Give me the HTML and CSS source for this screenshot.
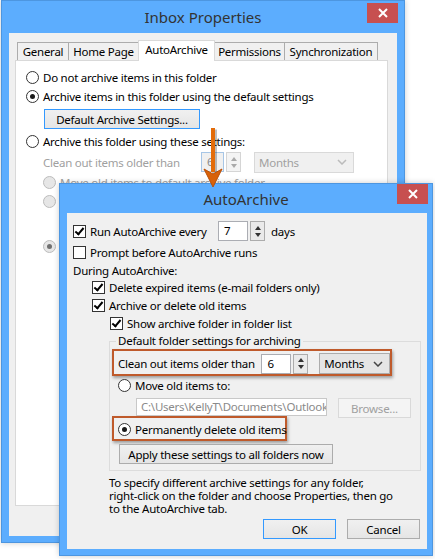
FILE: index.html
```html
<!DOCTYPE html>
<html lang="en">
  <head>
    <meta charset="UTF-8" />
    <title>AutoArchive</title>
    <link rel="stylesheet" href="styles.css">
  </head>
  <body>
    <div class="desk">
      <!-- folder properties dialog, behind -->
      <div class="window back">
        <div class="titlebar">
          <span class="title">Inbox Properties</span>
          <span class="close"><svg width="10" height="10" viewBox="0 0 10 10"><path d="M1 1L9 9M9 1L1 9" stroke="#fff" stroke-width="2"/></svg></span>
        </div>
        <div class="client">
          <div class="tabs">
            <span class="tab t51">General</span>
            <span class="tab t70">Home Page</span>
            <span class="tab t76 active">AutoArchive</span>
            <span class="tab t70">Permissions</span>
            <span class="tab t93">Synchronization</span>
          </div>
          <div class="panel">
            <div class="prow first"><span class="radio"></span>Do not archive items in this folder</div>
            <div class="prow"><span class="radio on"></span>Archive items in this folder using the default settings</div>
            <div class="btn focus wide">Default Archive Settings...</div>
            <div class="prow"><span class="radio"></span>Archive this folder using these settings:</div>
            <div class="prow ind dim tall">
              <span class="lbl">Clean out items older than</span>
              <span class="num dis">6</span>
              <span class="spin dis"><i class="up"></i><i class="down"></i></span>
              <span class="combo dis">Months<svg width="10" height="6" viewBox="0 0 10 6"><path d="M1 1L5 5L9 1" fill="none" stroke="#bbb" stroke-width="1.5"/></svg></span>
            </div>
            <div class="prow ind dim"><span class="radio dis"></span>Move old items to default archive folder</div>
            <div class="prow ind dim"><span class="radio dis"></span>Move old items to:</div>
            <div class="prow ind dim gap"><span class="radio dis on"></span>Permanently delete old items</div>
          </div>
        </div>
      </div>

      <!-- arrow pointing from the button to the opened dialog -->
      <svg class="arrow" width="30" height="70" viewBox="0 0 30 70">
        <path d="M15 0V44" stroke="rgba(0,0,0,.25)" stroke-width="5" transform="translate(1.5 1.5)"/>
        <path d="M15 0V44" stroke="#e36c0a" stroke-width="4"/>
        <path d="M6 41L15 59L24 41L15 46Z" fill="#d8620a" stroke="#b94f06" stroke-width="1"/>
      </svg>

      <!-- AutoArchive dialog, in front -->
      <div class="window front">
        <div class="titlebar small">
          <span class="title">AutoArchive</span>
          <span class="close"><svg width="10" height="10" viewBox="0 0 10 10"><path d="M1 1L9 9M9 1L1 9" stroke="#fff" stroke-width="2"/></svg></span>
        </div>
        <div class="client inner">
          <div class="row r20">
            <span class="check on"></span><span class="lbl w128">Run AutoArchive every</span>
            <span class="num">7</span>
            <span class="spin"><i class="up"></i><i class="down"></i></span>
            <span class="after">days</span>
          </div>
          <div class="row"><span class="check"></span>Prompt before AutoArchive runs</div>
          <div class="row">During AutoArchive:</div>
          <div class="row i1 short"><span class="check on"></span>Delete expired items (e-mail folders only)</div>
          <div class="row i1"><span class="check on"></span>Archive or delete old items</div>
          <div class="row i2"><span class="check on"></span>Show archive folder in folder list</div>

          <fieldset class="group">
            <legend>Default folder settings for archiving</legend>
            <div class="mark clean">
              <span class="lbl w144">Clean out items older than</span>
              <span class="num">6</span>
              <span class="spin"><i class="up"></i><i class="down"></i></span>
              <span class="combo">Months<svg width="10" height="6" viewBox="0 0 10 6"><path d="M1 1L5 5L9 1" fill="none" stroke="#444" stroke-width="1.5"/></svg></span>
            </div>
            <div class="row gi"><span class="radio"></span>Move old items to:</div>
            <div class="pathrow">
              <span class="path">C:\Users\KellyT\Documents\Outlook</span>
              <span class="btn dis browse">Browse...</span>
            </div>
            <div class="mark perm"><span class="radio on"></span>Permanently delete old items</div>
            <div class="btn apply">Apply these settings to all folders now</div>
          </fieldset>

          <p class="note">To specify different archive settings for any folder,<br>right-click on the folder and choose Properties, then go<br>to the AutoArchive tab.</p>

          <div class="actions">
            <span class="btn focus ok">OK</span>
            <span class="btn ok">Cancel</span>
          </div>
        </div>
      </div>
    </div>
  </body>
</html>
```

FILE: styles.css
```css
body {
  margin: 0;
  background: #fff;
  font-family: "Noto Sans", "Open Sans", sans-serif;
  font-size: 11.5px;
  letter-spacing: -0.25px;
  color: #000;
  white-space: nowrap;
}
.desk {
  position: relative;
  width: 435px;
  height: 559px;
  overflow: hidden;
}

/* window chrome */
.window {
  position: absolute;
  box-sizing: border-box;
  display: flex;
  flex-direction: column;
  background: #5cadfe;
  border: 1px solid #4d96e0;
  box-shadow: 0 0 6px rgba(0, 0, 0, 0.2);
}
.back {
  left: 1px;
  top: 0;
  width: 404px;
  height: 543px;
}
.front {
  left: 59px;
  top: 183px;
  width: 374px;
  height: 373px;
}
.titlebar {
  position: relative;
  height: 32px;
  flex: none;
  display: flex;
  align-items: center;
  justify-content: center;
}
.titlebar.small {
  height: 29px;
}
.title {
  font-size: 15px;
  letter-spacing: 0;
  color: #333;
}
.close {
  position: absolute;
  right: 6px;
  top: 2px;
  width: 31px;
  height: 20px;
  background: #c75050;
  display: flex;
  align-items: center;
  justify-content: center;
}
.small .close {
  right: 4px;
  top: 0;
}
.client {
  flex: 1;
  background: #f0f0f0;
  margin: 0 7px 6px 7px;
  display: flex;
  flex-direction: column;
}
.client.inner {
  margin: 0 5px 6px 7px;
  padding: 8px 0 0 6px;
}

/* tabs */
.tabs {
  display: flex;
  align-items: flex-end;
  margin: 7px 0 0 8px;
  height: 20px;
}
.tab {
  box-sizing: border-box;
  height: 18px;
  line-height: 17px;
  text-align: center;
  border: 1px solid #acacac;
  border-bottom: none;
  margin-right: -1px;
  background: #f0f0f0;
}
.t51 {
  width: 52px;
}
.t70 {
  width: 71px;
}
.t76 {
  width: 77px;
}
.t93 {
  width: 94px;
}
.tab.active {
  position: relative;
  z-index: 1;
  height: 21px;
  line-height: 18px;
  margin-bottom: -1px;
  background: #fff;
  border-color: #d9d9d9;
}
.panel {
  flex: none;
  height: 437px;
  margin: 0 9px 0 6px;
  background: #fff;
  border: 1px solid #d9d9d9;
  padding: 7px 0 0 10px;
}
.prow {
  display: flex;
  align-items: center;
  height: 19px;
}
.prow.ind {
  margin-left: 17px;
}
.prow.tall {
  height: 22px;
}
.prow.gap {
  margin-top: 26px;
}
.dim {
  color: #a0a0a0;
}

/* controls */
.radio,
.check {
  flex: none;
  box-sizing: border-box;
  width: 13px;
  height: 13px;
  margin-right: 4px;
  background: #fff;
  border: 1px solid #333;
  position: relative;
}
.radio {
  border-radius: 50%;
}
.radio.on::after {
  content: "";
  position: absolute;
  left: 3px;
  top: 3px;
  width: 5px;
  height: 5px;
  border-radius: 50%;
  background: #1a1a1a;
}
.radio.dis {
  background: #e6e6e6;
  border-color: #bcbcbc;
}
.radio.dis.on::after {
  background: #707070;
}
.check.on::after {
  content: "";
  position: absolute;
  left: 3px;
  top: 0;
  width: 3px;
  height: 7px;
  border: solid #000;
  border-width: 0 2px 2px 0;
  transform: rotate(40deg);
}
.lbl {
  display: inline-block;
}
.prow .lbl {
  width: 158px;
}
.w128 {
  width: 128px;
}
.w144 {
  width: 144px;
}
.num {
  box-sizing: border-box;
  width: 30px;
  height: 20px;
  line-height: 18px;
  padding-left: 5px;
  background: #fff;
  border: 1px solid #abadb3;
}
.num.dis {
  width: 23px;
  background: #f0f0f0;
  border-color: #a7c6e6;
  color: #888;
}
.spin {
  box-sizing: border-box;
  width: 15px;
  height: 20px;
  margin-left: 2px;
  border: 1px solid #acacac;
  background: #eaeaea;
  display: flex;
  flex-direction: column;
  align-items: center;
  justify-content: space-around;
  padding: 2px 0;
}
.spin.dis {
  border-color: #d5d5d5;
  background: #f4f4f4;
}
.spin i {
  width: 0;
  height: 0;
  border-left: 3px solid transparent;
  border-right: 3px solid transparent;
}
.spin .up {
  border-bottom: 4px solid #333;
}
.spin .down {
  border-top: 4px solid #333;
}
.spin.dis .up {
  border-bottom-color: #aaa;
}
.spin.dis .down {
  border-top-color: #aaa;
}
.combo {
  box-sizing: border-box;
  display: flex;
  align-items: center;
  justify-content: space-between;
  width: 71px;
  height: 21px;
  margin-left: 11px;
  padding: 0 6px 0 4px;
  background: #e5e5e5;
  border: 1px solid #acacac;
}
.combo.dis {
  width: 100px;
  margin-left: 13px;
  background: #f0f0f0;
  border-color: #d9d9d9;
}
.after {
  margin-left: 6px;
}

.btn {
  box-sizing: border-box;
  display: flex;
  align-items: center;
  justify-content: center;
  height: 20px;
  background: linear-gradient(#f0f0f0, #e5e5e5);
  border: 1px solid #acacac;
}
.btn.focus {
  border-color: #3399ff;
}
.btn.wide {
  width: 156px;
  margin: 3px 0 3px 18px;
}
.btn.dis {
  color: #a0a0a0;
  border-color: #d9d9d9;
  background: #f4f4f4;
}

/* AutoArchive rows */
.row {
  display: flex;
  align-items: center;
  height: 18px;
}
.r20 {
  height: 20px;
  margin-bottom: 2px;
}
.i1 {
  margin-left: 19px;
}
.i1.short {
  height: 17px;
}
.i2 {
  margin-left: 37px;
  height: 19px;
}
.group {
  margin: 0 0 0 36px;
  width: 312px;
  box-sizing: border-box;
  border: 1px solid #dcdcdc;
  padding: 0 0 6px 2px;
}
.group legend {
  padding: 0 2px;
  margin-left: 4px;
  line-height: 16px;
}
.mark {
  box-sizing: border-box;
  display: flex;
  align-items: center;
  border: 2px solid #bf5a2b;
  box-shadow: 1px 2px 3px rgba(0, 0, 0, 0.35);
}
.mark.clean {
  width: 280px;
  height: 27px;
  padding: 2px 0 0 4px;
}
.mark.perm {
  width: 175px;
  height: 25px;
  padding: 2px 0 0 4px;
}
.gi {
  margin-left: 6px;
}
.pathrow {
  display: flex;
  align-items: flex-start;
  height: 18px;
  margin: 4px 0 0 24px;
}
.path {
  box-sizing: border-box;
  width: 191px;
  height: 18px;
  line-height: 16px;
  padding-left: 4px;
  color: #8a8a8a;
  background: #fff;
  border: 1px solid #c8c8c8;
  overflow: hidden;
}
.browse {
  width: 73px;
  margin-left: 11px;
}
.apply {
  width: 214px;
  margin: 3px 0 0 7px;
}
.note {
  margin: 5px 0 0 36px;
  line-height: 13px;
}
.actions {
  display: flex;
  gap: 11px;
  margin: 4px 0 0 190px;
}
.ok {
  width: 73px;
}

.arrow {
  position: absolute;
  left: 198px;
  top: 128px;
  z-index: 2;
}
```
